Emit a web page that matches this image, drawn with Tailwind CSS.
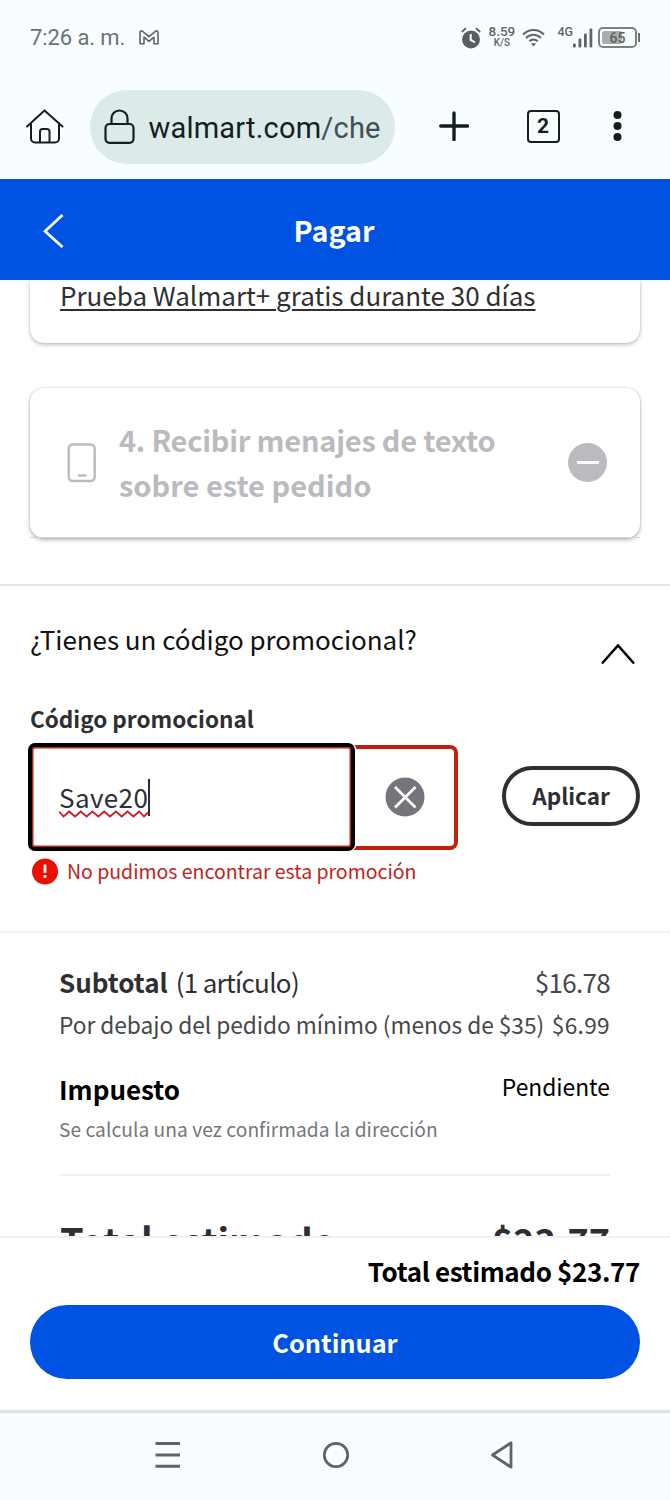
<!DOCTYPE html>
<html lang="es">
<head>
<meta charset="utf-8">
<title>Pagar</title>
<script src="https://cdn.jsdelivr.net/npm/@tailwindcss/browser@4"></script>
</head>
<body class="flex h-[1500px] w-[670px] flex-col overflow-hidden bg-white font-['Noto_Sans_CJK_SC','Noto_Sans',sans-serif] text-[#2e2f32]">

  <!-- Status bar -->
  <div class="flex h-[75px] shrink-0 items-center bg-[#f8feff] pl-[30px] pr-[30px] font-[Roboto,sans-serif] text-[#5f6466]">
    <span class="w-[98px] whitespace-nowrap pt-px text-[22px] leading-[30px] tracking-[-0.1px] text-[#6d7173]">7:26 a. m.</span>
    <svg class="ml-[11px] h-4 w-5" viewBox="0 0 20 16" fill="none" stroke="#5f6466" stroke-width="1.6" stroke-linejoin="round"><path d="M1 13.800V2.400C1 .9 2.600.5 3.600 1.300L10 6.600l6.400-5.300C17.400.5 19 .9 19 2.400v11.400h-4V7.200l-5 4.200-5-4.200v6.600z"/></svg>
    <span class="grow"></span>
    <svg class="h-[22px] w-5" viewBox="0 0 20 22" fill="none" stroke="#5a5d5f"><circle cx="10" cy="12.500" r="9" fill="#5a5d5f" stroke="none"/><path d="M.8 5 5 1.200M19.200 5 15 1.200" stroke-width="1.700"/><path d="M9.700 7v6l4.300 2.300" stroke="#f8feff" stroke-width="2"/></svg>
    <div class="ml-[7px] flex w-[27px] flex-col items-center pb-[3px]">
      <span class="text-[13.500px] font-medium leading-[12px]">8.59</span>
      <span class="text-[10px] font-medium leading-[11px]">K/S</span>
    </div>
    <svg class="ml-[7px] h-[19px] w-[23px]" viewBox="0 0 23 19" fill="none" stroke="#5f6466" stroke-width="2"><path d="M1 6.500C7 .4 16 .4 22 6.500M4 10c4.400-4.300 10.600-4.300 15 0M7.300 13.300c2.500-2.300 5.900-2.300 8.400 0"/><path d="M8.800 15.200h5.400L11.500 18.500z" fill="#5f6466" stroke="none"/></svg>
    <span class="ml-[12px] self-start pt-[24px] text-[12.500px] font-medium leading-[16px]">4G</span>
    <svg class="h-5 w-5" viewBox="0 0 20 20" fill="#5f6466"><rect x="0" y="15.500" width="2.800" height="4" rx="1"/><rect x="5.500" y="10.500" width="2.800" height="9" rx="1"/><rect x="11" y="5.500" width="2.800" height="14" rx="1"/><rect x="16.500" y="0.500" width="2.800" height="19" rx="1"/></svg>
    <div class="ml-[5px] flex items-center">
      <div class="relative flex h-[21px] w-[39px] items-center justify-center rounded-[5px] border-2 border-[#7c8082] text-[14px] font-medium leading-none">
        <div class="absolute left-[2px] top-[2px] h-[13px] w-[20px] rounded-[2px] bg-[#a9adae]"></div><span class="relative">65</span>
      </div>
      <div class="ml-px h-[9px] w-[2px] bg-[#6b6e70]"></div>
    </div>
  </div>

  <!-- Browser toolbar -->
  <div class="flex h-[104px] shrink-0 items-start bg-[#f8feff] pl-[26px] pt-[15px] font-[Roboto,sans-serif] text-[#151d1f]">
    <svg class="mt-[19px] h-9 w-[38px]" viewBox="0 0 38 36" fill="none" stroke="#151d1f" stroke-width="2" stroke-linecap="round" stroke-linejoin="round"><path d="M1 17.500 18.500 1.500 36.500 17.500M5 14v15.500a4 4 0 0 0 4 4h20a4 4 0 0 0 4-4V14M14 33.500V22.500a2.500 2.500 0 0 1 2.500-2.500h4.500a2.500 2.500 0 0 1 2.500 2.500v11"/></svg>
    <div class="ml-[25.500px] flex h-[74px] w-[305px] items-center rounded-full bg-[#dceaea] pl-[14px]">
      <svg class="h-[36px] w-8" viewBox="0 0 32 36" fill="none" stroke="#151d1f" stroke-width="2.200"><rect x="1.500" y="15" width="28" height="18.800" rx="4"/><path d="M7.500 15V9.500a8 8 0 0 1 16 0V15"/></svg>
      <div class="ml-[13px] mt-px w-[231px] overflow-hidden whitespace-nowrap text-[29px] leading-[40px] tracking-[0.2px]">walmart.com<span class="text-[#3f5053]">/che</span></div>
    </div>
    <svg class="ml-[44px] mt-[21px] h-[30px] w-[30px]" viewBox="0 0 30 30" fill="none" stroke="#151d1f" stroke-width="3.400" stroke-linecap="round"><path d="M15 2v26.500M1.800 15h26.700"/></svg>
    <div class="ml-[58px] mt-5 flex h-[33px] w-[33px] items-center justify-center rounded-[4px] border-[2.500px] border-[#151d1f] text-[21px] font-bold leading-none">2</div>
    <svg class="ml-[53px] mt-[20px] h-8 w-[9px]" viewBox="0 0 9 32" fill="#151d1f"><circle cx="4.500" cy="5" r="4"/><circle cx="4.500" cy="16" r="4"/><circle cx="4.500" cy="27" r="4"/></svg>
  </div>

  <!-- Page header -->
  <header class="grid h-[101px] shrink-0 grid-cols-[1fr_auto_1fr] items-center bg-[#0053e2] text-white">
    <svg class="ml-[43px] mt-[2px] h-[34px] w-[21px]" viewBox="0 0 21 34" fill="none" stroke="#fff" stroke-width="2.800"><path d="M19.500 1 2 17.200 19.500 33"/></svg>
    <h1 class="-ml-px mr-px text-[28.700px] font-bold leading-[40px]">Pagar</h1>
  </header>

  <main class="flex h-[956px] shrink-0 flex-col overflow-hidden">
    <div class="mx-[30px] h-[63px] shrink-0 rounded-b-[14px] pl-[30px] shadow-[0_2px_4px_rgba(0,0,0,0.22),0_0_2px_rgba(0,0,0,0.18)]">
      <a class="block whitespace-nowrap text-[26px] leading-[30px] underline decoration-2 underline-offset-[3px]">Prueba Walmart+ gratis durante 30 días</a>
    </div>

    <div class="mx-[30px] mt-[45px] flex h-[150px] shrink-0 items-center rounded-[14px] pb-[2px] pl-[37px] pr-[33px] shadow-[0_2px_4px_rgba(0,0,0,0.28),0_0_2px_rgba(0,0,0,0.18)]">
      <svg class="mt-px h-10 w-[30px]" viewBox="0 0 30 40" fill="none" stroke="#babbbe" stroke-width="2.400"><rect x="1.700" y="1.500" width="26" height="36.500" rx="4"/><path d="M11 32.500h8.500"/></svg>
      <p class="ml-[22px] whitespace-nowrap text-[29px] font-bold leading-[45px] text-[#babbbe]"><span class="tracking-[-0.240px]">4. Recibir menajes de texto</span><br>sobre este pedido</p>
      <span class="ml-auto flex size-[39px] items-center justify-center rounded-full bg-[#babbbe]"><span class="h-[3px] w-[22px] bg-white"></span></span>
    </div>
    <hr class="mx-[30px] -mt-px shrink-0 border-t border-[#d4d4d6]">

    <!-- Promo code -->
    <section class="mt-[46px] h-[349px] shrink-0 border-b-2 border-t-2 border-b-[#f1f1f2] border-t-[#e3e4e5] px-[30px]">
      <div class="flex justify-between">
        <h2 class="mt-[33px] whitespace-nowrap text-[26px] leading-[40px] tracking-[-0.040px] text-[#111]">¿Tienes un código promocional?</h2>
        <svg class="mr-[5px] mt-[57px] h-[22px] w-[34px]" viewBox="0 0 34 22" fill="none" stroke="#000" stroke-width="2.500"><path d="M1 20.500 17 2.500 33 20.500"/></svg>
      </div>
      <label class="mt-[38px] block text-[22.500px] font-bold leading-[30px]">Código promocional</label>
      <div class="mt-[10px] flex h-[108px] items-center justify-between">
        <div class="relative -ml-[2px] flex h-[108px] w-[430px] items-center">
          <div class="relative z-10 flex h-[108px] w-[327px] shrink-0 items-center rounded-[7px] border-4 border-black bg-white pl-[27px] shadow-[inset_0_0_0_1.500px_#b3261e,1.500px_0_0_#fff]">
            <div class="relative flex items-center">
              <span class="text-[26px] leading-[36px] tracking-[0.400px]">Save20</span>
              <span class="h-[37px] w-[2px] bg-[#2e2f32]"></span>
              <svg class="absolute left-0 top-[31px] h-[8px] w-[90px]" viewBox="0 0 90 8" fill="none" stroke="#c81e2b" stroke-width="1.800"><path d="M0 1.500 4.500 6.500 10.200 1.500 16 6.500 21.800 1.500 27.600 6.500 33.500 1.500 39.300 6.500 45.200 1.500 51 6.500 56.900 1.500 62.700 6.500 68.500 1.500 74.400 6.500 80.200 1.500 85 6.500 89 2.500"/></svg>
            </div>
          </div>
          <div class="-ml-[3px] flex h-[105px] w-[106px] items-center justify-center rounded-r-[8px] border-4 border-l-0 border-[#c1200f]">
            <svg class="ml-1 size-[40px]" viewBox="0 0 40 40"><circle cx="20" cy="20" r="19.500" fill="#74767c"/><path d="M10 10 30.500 30.500M30.500 10 10 30.500" stroke="#fff" stroke-width="2.700"/></svg>
          </div>
        </div>
        <button class="mt-[-3px] flex h-[60px] w-[138px] items-center justify-center rounded-full border-4 border-[#2e2f32] text-[22.500px] font-bold leading-none">Aplicar</button>
      </div>
      <div class="mt-[5px] flex items-center gap-[9px] pl-[1px]">
        <svg class="size-7" viewBox="0 0 28 28"><circle cx="14" cy="14.500" r="13" fill="#ea1100"/><path d="M14 7.500v8.200M14 18v2.800" stroke="#fff" stroke-width="2.800"/></svg>
        <span class="-ml-[1px] whitespace-nowrap text-[19.500px] leading-[30px] tracking-[-0.020px] text-[#c0241b]">No pudimos encontrar esta promoción</span>
      </div>
    </section>

    <!-- Price summary -->
    <section class="flex shrink-0 flex-col pl-[59px] pr-[60px] pt-[29px]">
      <div class="flex justify-between text-[26px] leading-[40px]">
        <span class="whitespace-nowrap"><b>Subtotal</b><span class="ml-[8px] tracking-[-0.700px]">(1 artículo)</span></span>
        <span class="tracking-[-0.700px] text-[#46474a]">$16.78</span>
      </div>
      <div class="mt-[5px] flex justify-between whitespace-nowrap text-[22.700px] leading-[36px] text-[#46474a]">
        <span class="tracking-[-0.030px]">Por debajo del pedido mínimo (menos de $35)</span><span class="tracking-[0.300px]">$6.99</span>
      </div>
      <div class="mt-[26px] flex h-[40px] justify-between text-black">
        <b class="text-[26px] leading-[40px]">Impuesto</b><span class="text-[22.800px] leading-[36px]">Pendiente</span>
      </div>
      <p class="mt-[5px] text-[19.200px] leading-[30px] tracking-[0.040px] text-[#74767c]">Se calcula una vez confirmada la dirección</p>
      <hr class="ml-px mt-[30px] border-t-2 border-[#f1f1f2]">
      <div class="mt-[39px] flex items-start justify-between whitespace-nowrap pl-px font-bold">
        <span class="text-[38px] leading-[50px]">Total estimado</span><span class="text-[36px] leading-[48px]">$23.77</span>
      </div>
    </section>
  </main>

  <!-- Sticky total and call to action -->
  <footer class="flex h-[174px] shrink-0 flex-col border-t-2 border-[#f1f1f2] bg-white px-[30px]">
    <p class="mt-[13px] text-right text-[26px] font-bold leading-[40px] tracking-[-0.380px] text-black">Total estimado $23.77</p>
    <button class="mt-[14px] h-[74px] shrink-0 rounded-full bg-[#0053e2] text-[25.300px] font-bold leading-[40px] text-white">Continuar</button>
  </footer>

  <!-- System navigation -->
  <nav class="flex h-[90px] shrink-0 items-center justify-between border-t-[3px] border-[#dfe4e6] bg-[#f8feff] pb-[3px] pl-[155px] pr-[156px]">
    <svg class="h-7 w-[26px]" viewBox="0 0 26 28" stroke="#5f6466" stroke-width="3"><path d="M.5 2.500h24.500M.5 14h24.500M.5 25.300h24.500"/></svg>
    <svg class="size-7" viewBox="0 0 28 28" fill="none" stroke="#5f6466" stroke-width="2.800"><circle cx="14" cy="14" r="11.700"/></svg>
    <svg class="h-7 w-6" viewBox="0 0 24 28" fill="none" stroke="#5f6466" stroke-width="2.800" stroke-linejoin="round"><path d="M21 1.800V26.200L2.500 14z"/></svg>
  </nav>
</body>
</html>
